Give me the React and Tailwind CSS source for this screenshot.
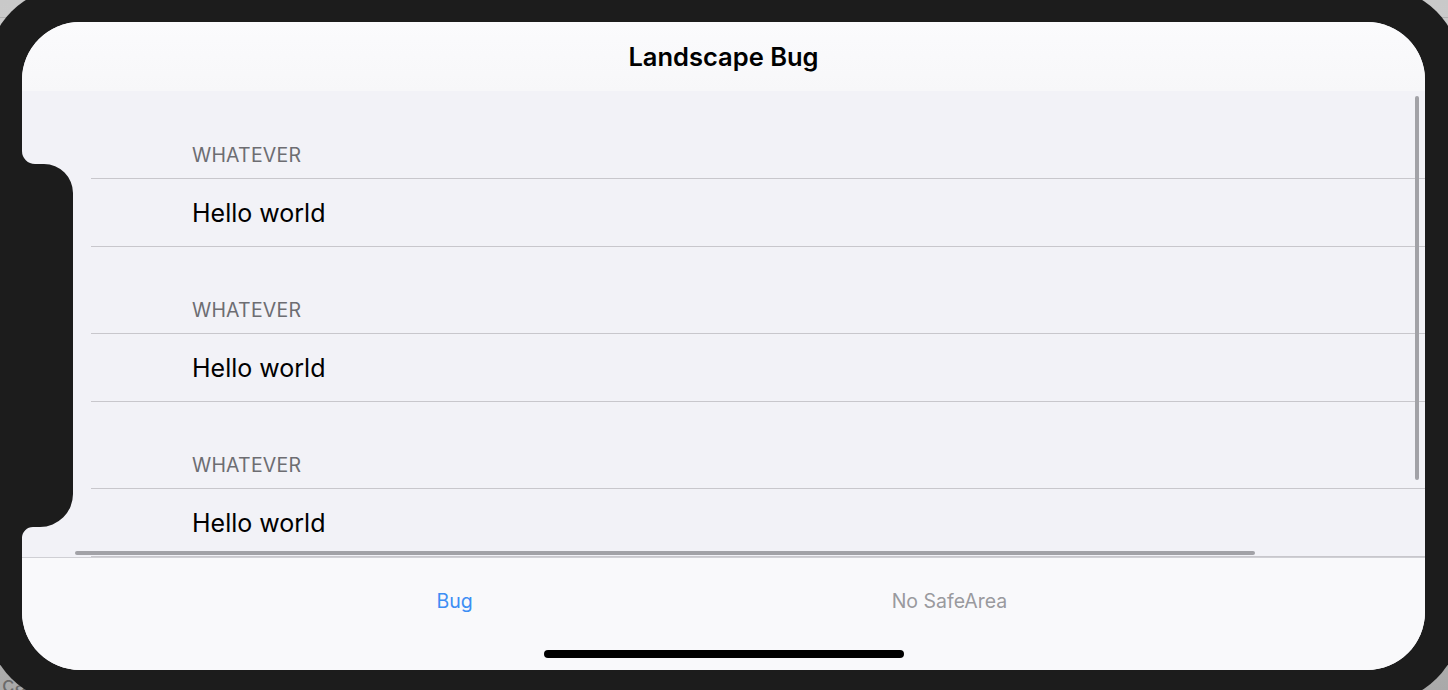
import React from "react";

const font = { fontFamily: "Inter, 'Noto Sans', sans-serif" };

function Section() {
  return (
    <div className="flex flex-col">
      <div className="h-[86px] flex items-end pb-[11px] pl-[170px]">
        <span className="text-[19.5px] leading-[24px] text-[#6d6d72] tracking-[0.2px]">WHATEVER</span>
      </div>
      <div className="ml-[69px] h-[69px] border-t border-b border-[#c8c7cc] flex items-center pl-[101px]">
        <span className="text-[25px] leading-[30px] text-black">Hello world</span>
      </div>
    </div>
  );
}

export default function App() {
  return (
    <div
      className="w-[1448px] h-[690px] overflow-hidden relative bg-gradient-to-b from-[#c9c9c9] via-[#d2d2d2] to-[#a9a9a9]"
      style={font}
    >
      <div className="absolute left-0 top-[17px] w-[1448px] h-px bg-[#b0b0b0]" />
      <div className="absolute left-[2px] top-[672px] text-[22px] leading-[24px] text-[#6a6a6a]">ca</div>
      <div className="relative -ml-[12px] -mt-[12px] w-[1472px] h-[714px] rounded-[80px] bg-[#1c1c1c] pt-[34px] pl-[34px]">
        <div className="relative w-[1403px] h-[648px] rounded-[58px] overflow-hidden flex flex-col bg-[#f9f9fb]">
          <div className="h-[69px] shrink-0 flex items-center justify-center bg-gradient-to-b from-[#fbfbfd] to-[#f7f7f9]">
            <span className="text-[25.5px] leading-[30px] font-semibold text-black">Landscape Bug</span>
          </div>
          <div className="relative flex-1 bg-[#f2f2f7] overflow-hidden pt-[1px]">
            <Section />
            <Section />
            <Section />
            <div className="absolute left-[53px] bottom-[2px] w-[1180px] h-[4px] rounded-full bg-[#a2a2a7]" />
            <div className="absolute right-[6px] top-[5px] w-[4px] h-[384px] rounded-full bg-[#a2a2a7]" />
          </div>
          <div className="h-[113px] shrink-0 border-t border-[#cfcfd4] bg-[#f9f9fb] flex flex-col">
            <div className="h-[85px] flex items-center pl-[185px]">
              <div className="w-[495px] flex justify-center">
                <span className="text-[19.5px] leading-[24px] text-[#3d8ef4]">Bug</span>
              </div>
              <div className="w-[495px] flex justify-center">
                <span className="text-[19.5px] leading-[24px] text-[#9a9a9e]">No SafeArea</span>
              </div>
            </div>
            <div className="mt-[7px] self-center w-[360px] h-[8px] rounded-full bg-black" />
          </div>
          <svg className="absolute left-0 top-0" width="60" height="648" viewBox="0 0 60 648">
            <path
              d="M0,129 A13,13 0 0 0 13,142 H22 A29,29 0 0 1 51,171 V472 A33,33 0 0 1 18,505 H11 A11,11 0 0 0 0,516 Z"
              fill="#1c1c1c"
            />
          </svg>
        </div>
      </div>
    </div>
  );
}
